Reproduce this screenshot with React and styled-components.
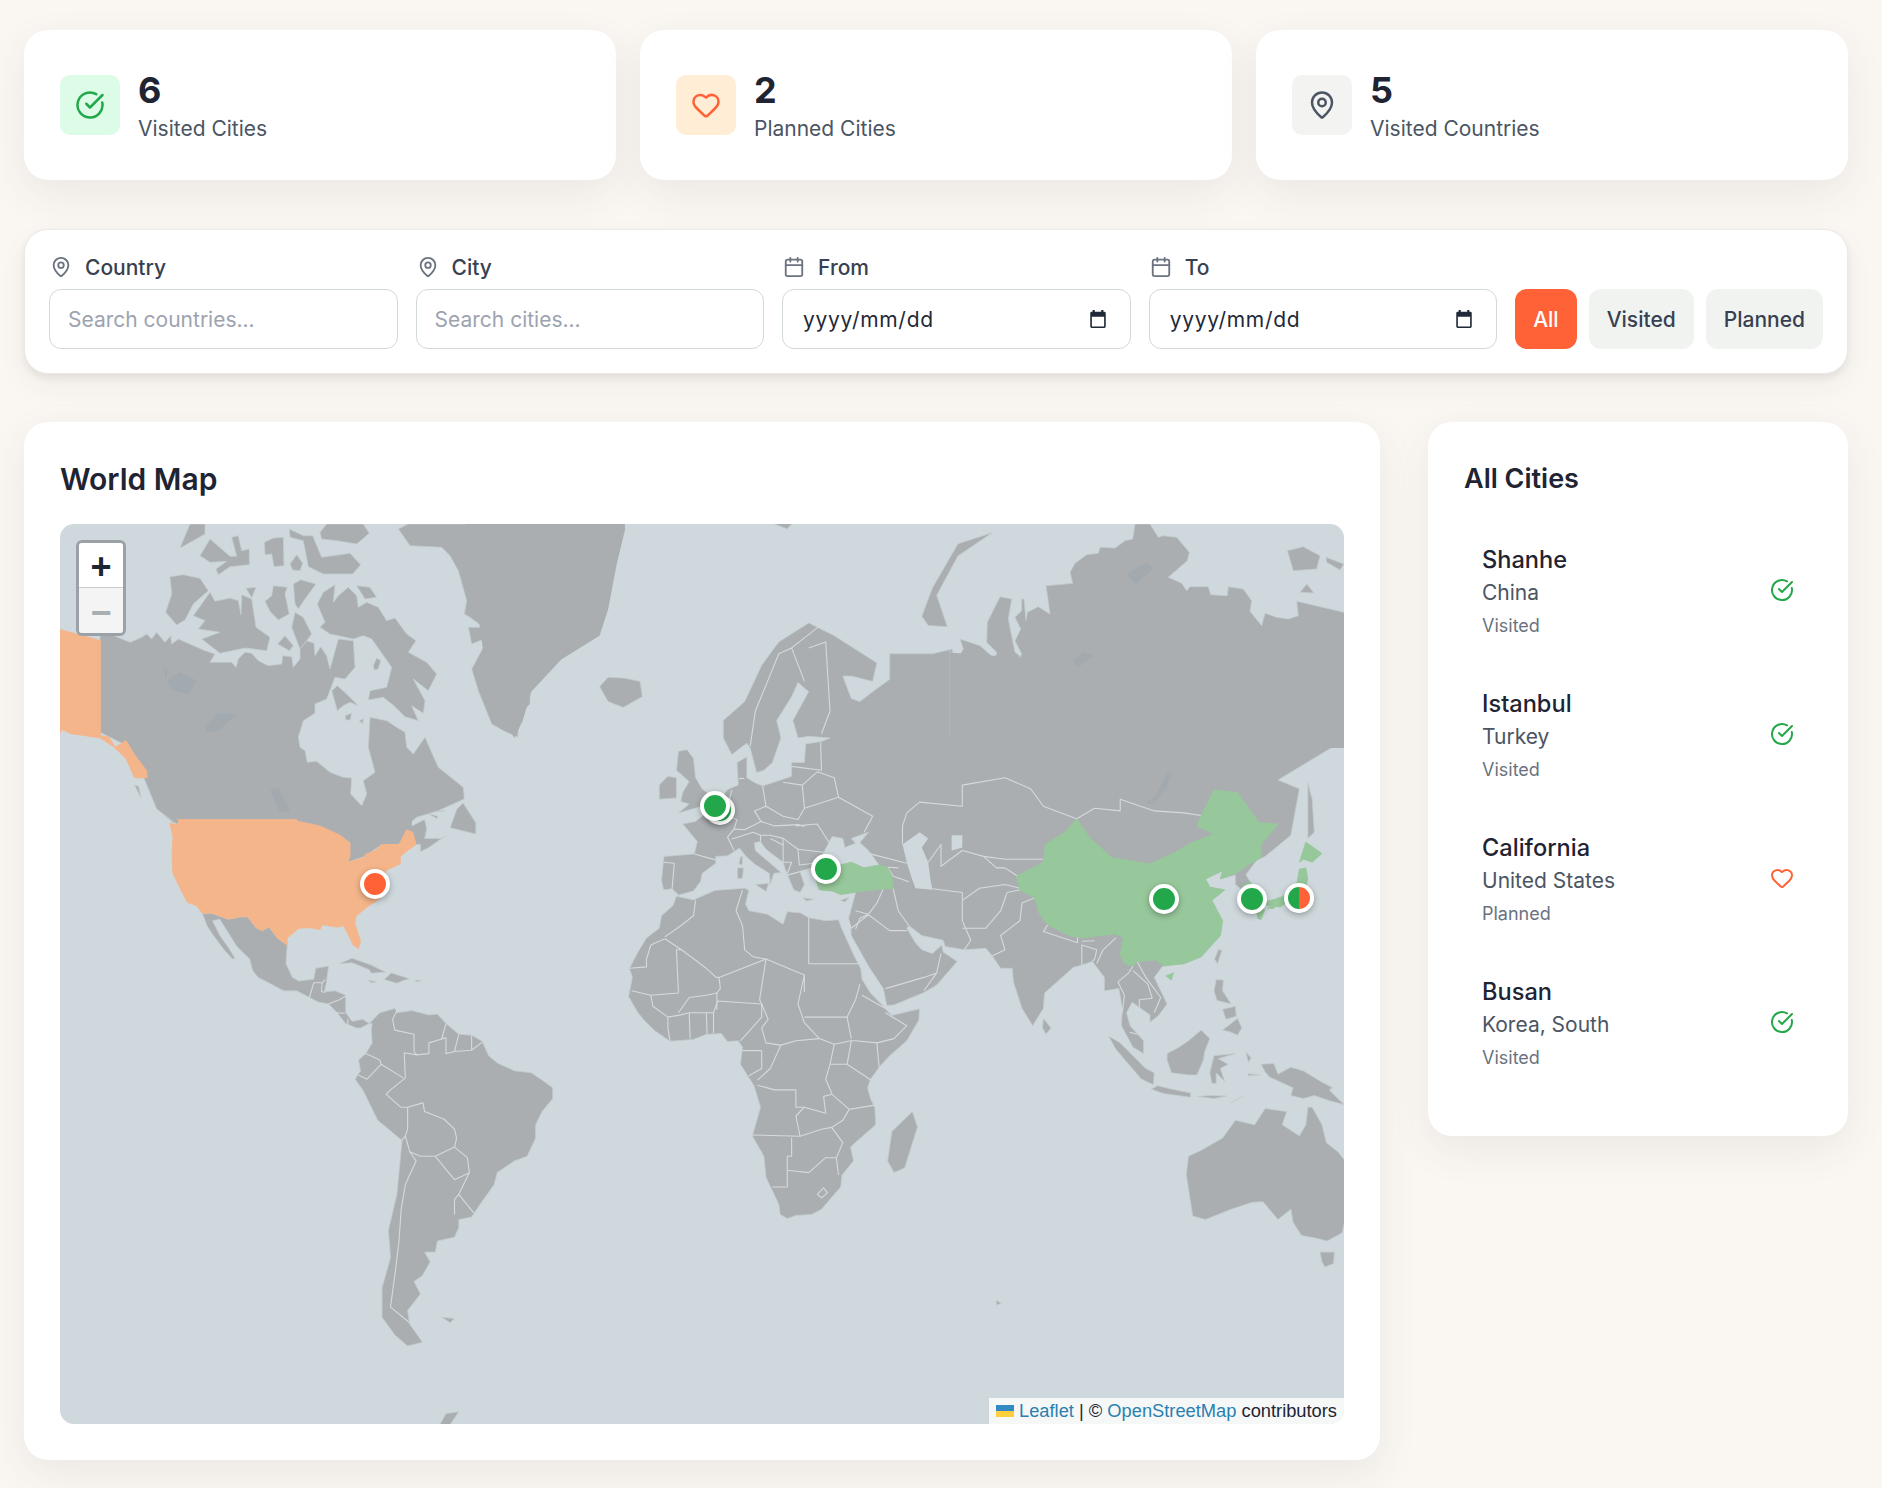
import React from 'react';
import styled, { createGlobalStyle } from 'styled-components';
import { CircleCheckBig, Heart, MapPin, Calendar } from 'lucide-react';

// map projection, leaflet style web mercator
const SCALE = 4.267;
const RADIUS = 244.5;
const projectX = (lon) => 642 + SCALE * lon;
const projectY = (lat) =>
  536 - RADIUS * Math.log(Math.tan(Math.PI / 4 + (lat * Math.PI) / 360));

const toPath = (pts, close = true) =>
  pts
    .map(([lon, lat], i) => `${i ? 'L' : 'M'}${projectX(lon).toFixed(1)} ${projectY(lat).toFixed(1)}`)
    .join('') + (close ? 'Z' : '');

// shapes traced at 3x, with an offset inside the 1284x900 map
const tracedPath = (pts, ox) =>
  pts
    .map(([x, y], i) => `${i ? 'L' : 'M'}${(ox + x / 3).toFixed(1)} ${(y / 3).toFixed(1)}`)
    .join('') + 'Z';

const CANADA_X = 70;
const SIBERIA_X = 890;

// canada and its arctic islands, plus the west coast of greenland
const CANADA_TRACED = [
  [[-90,318],[0,355],[35,340],[50,330],[65,345],[80,325],[105,355],[122,335],[125,360],[145,345],[225,380],[255,390],[240,415],[305,415],[318,430],[325,405],[345,385],[365,388],[385,410],[415,425],[455,420],[458,395],[485,398],[490,430],[510,405],[510,375],[530,350],[552,358],[555,395],[572,368],[590,395],[600,435],[625,345],[670,350],[675,430],[645,465],[615,460],[590,525],[555,540],[555,568],[520,590],[505,640],[510,670],[525,680],[532,715],[560,712],[600,745],[640,760],[665,762],[662,810],[695,845],[710,810],[700,770],[735,745],[715,670],[720,580],[770,590],[800,610],[825,625],[830,670],[850,690],[885,640],[925,730],[1000,790],[1003,825],[925,860],[860,880],[835,900],[140,900],[80,855],[45,770],[0,670],[-90,625]],
  [[120,158],[160,152],[210,163],[235,200],[190,240],[165,288],[140,303],[107,265],[125,210]],
  [[190,275],[240,205],[255,232],[300,222],[325,230],[333,272],[335,212],[365,225],[378,310],[420,340],[410,380],[345,372],[270,388],[215,345],[270,325],[205,315],[225,290]],
  [[180,0],[225,0],[225,30],[190,50],[150,72]],
  [[240,45],[300,97],[320,97],[305,40],[325,35],[335,80],[358,75],[358,122],[300,128],[265,152],[258,135],[290,112],[240,115],[210,95]],
  [[403,55],[430,42],[460,40],[462,125],[432,128],[425,90],[405,92]],
  [[478,15],[520,35],[548,35],[575,100],[660,88],[692,122],[668,150],[580,150],[535,128],[520,50],[480,40]],
  [[480,120],[500,92],[518,118],[510,140],[488,138]],
  [[570,25],[590,0],[700,0],[718,28],[680,60],[620,50],[575,45]],
  [[348,193],[378,190],[365,222]],
  [[405,232],[425,215],[430,185],[472,190],[465,210],[478,270],[445,288],[420,262]],
  [[490,180],[512,167],[558,180],[525,225],[505,255],[495,240]],
  [[562,240],[580,205],[615,182],[610,235],[625,215],[655,190],[680,215],[685,250],[710,235],[745,250],[770,290],[795,282],[830,330],[858,350],[835,385],[890,415],[920,450],[895,500],[850,465],[885,530],[880,568],[845,545],[865,590],[825,578],[795,548],[760,520],[715,528],[720,500],[770,490],[785,430],[725,345],[700,335],[670,345],[600,330],[570,310],[585,295]],
  [[680,185],[720,190],[740,220],[705,225]],
  [[443,360],[465,335],[490,365],[478,380]],
  [[730,425],[740,402],[752,410],[745,435],[733,438]],
  [[485,310],[495,265],[520,280],[545,330],[530,350],[510,375]],
  [[605,500],[622,485],[650,510],[685,545],[660,535],[640,545],[622,560]],
  [[645,575],[665,568],[660,588],[648,588]],
  [[688,590],[700,584],[698,600]],
  [[805,15],[835,0],[1200,0],[1200,540],[1168,572],[1163,640],[1120,620],[1085,600],[1045,500],[1025,435],[1060,370],[1062,345],[1025,360],[1015,310],[1060,310],[1020,280],[1003,270],[1010,230],[985,140],[960,95],[935,70],[840,65]],
];

// north siberian coast and the islands above it
const SIBERIA_TRACED = [
  [[0,380],[25,400],[40,375],[30,345],[90,365],[135,405],[140,385],[110,355],[112,295],[150,218],[185,225],[175,285],[195,385],[215,400],[180,468],[170,462],[215,390],[195,350],[212,315],[195,280],[215,260],[215,225],[222,225],[228,290],[232,265],[265,248],[300,270],[288,185],[368,178],[360,145],[375,118],[410,92],[445,88],[450,70],[495,72],[525,50],[548,45],[555,0],[600,0],[625,40],[640,35],[680,40],[718,85],[712,110],[655,160],[695,178],[710,200],[720,188],[775,188],[782,212],[832,215],[835,188],[880,195],[905,230],[900,262],[935,305],[945,268],[980,280],[1015,285],[1045,275],[1040,232],[1182,265],[1300,300],[1300,640],[0,640]],
  [[1012,80],[1060,68],[1110,95],[1100,135],[1030,140]],
  [[1128,100],[1182,120],[1170,138],[1130,115]],
  [[1050,205],[1070,180],[1092,207]],
];

// slightly darker terrain marks, lakes on the tile layer
const CANADA_SHADE = [
  [[110,470],[150,445],[200,470],[175,510],[130,500]],
  [[225,610],[260,570],[320,570],[265,620],[230,625]],
  [[420,800],[445,790],[480,860],[450,865]],
  [[110,470],[100,430],[112,440]],
];
const SIBERIA_SHADE = [
  [[585,840],[620,810],[650,750],[665,745],[650,790],[610,840]],
  [[530,150],[590,115],[610,135],[555,180]],
  [[370,410],[400,385],[430,395],[385,430]],
];

// plain fills that hide the joins between traced and projected shapes
const SEAMS = [
  // east greenland
  [[-40,83],[-60,83],[-50,65],[-44,60],[-42,62],[-40,65],[-33,68],[-24,70],[-22,72],[-20,75],[-18,77],[-20,81]],
  // siberia
  [[58,68.6],[150.6,66],[150.6,58.8],[58,58.8]],
  // southern canada
  [[-120,51],[-68,51],[-68,47],[-120,47]],
];

// coastlines
const LAND = [
  // canada south of the traced part
  [[-125,50],[-60,50.3],[-66,50],[-70,47.3],[-65,49],[-64.5,47.5],[-65,46],[-61,46],[-60,46.5],[-64,44.5],[-66,43.8],[-66,45],[-67,45],[-71,45],[-75,45],[-79,43],[-83,42],[-82.5,45.3],[-89.5,48],[-95,49],[-123,49]],
  // mexico and central america
  [[-117.1,32.5],[-116,30],[-114.5,28],[-112,25],[-110,23],[-109.5,23.2],[-111,25.5],[-113,28],[-114.7,31],[-113,31.3],[-111,28.5],[-109,25.7],[-106,23],[-105.3,20.5],[-104,19],[-101,17.5],[-98,16],[-95,16],[-93,15],[-90,13.5],[-87.5,13],[-85.5,11],[-83.5,8.5],[-81,7.5],[-80,7.5],[-78,8.5],[-79.5,9.5],[-82,9],[-83.5,11],[-83.5,15],[-86,16],[-88.5,15.8],[-88,18],[-87.5,21.5],[-90.5,21],[-91,18.6],[-94.5,18.2],[-96,19],[-97.5,22],[-97.2,26],[-99.5,27.5],[-101.5,29.8],[-103,29],[-104.5,29.6],[-106.5,31.8],[-108.2,31.8],[-111,31.3],[-114.8,32.5]],
  [[-59,47.7],[-53,46.7],[-53,48.5],[-56,51.5],[-57.5,50.5]],
  [[-128,50.8],[-124,48.5],[-123.5,48.5],[-125,50.2]],
  [[-133,54],[-131.5,52.2],[-132,53.8]],
  [[-64.5,50],[-62,49.5],[-62,49.1]],
  // caribbean
  [[-85,22],[-82,23.2],[-77.5,21.7],[-74.2,20.2],[-77.5,19.9],[-78,20.7],[-82,22.2]],
  [[-74.5,18.5],[-72.8,20],[-68.5,18.7],[-70,18.3],[-71.5,17.7]],
  [[-78.3,18.4],[-76.2,18],[-77.5,17.8]],
  [[-67.2,18.4],[-65.7,18.3],[-67,18]],
  // iceland
  [[-24,65.5],[-22,64],[-18.5,63.4],[-14,64.5],[-14.5,66],[-18,66.3],[-22,66.4]],
  // south america
  [[-78,8.5],[-75.5,11],[-72,12],[-71.5,11],[-68,11.5],[-64,10.5],[-62,10.7],[-60,8.5],[-57,6],[-54,5.8],[-51.5,4.4],[-50,1],[-48,-0.7],[-44,-2.5],[-40,-3],[-37,-5],[-35,-6.5],[-35,-9],[-37.5,-12],[-39,-15],[-39,-18],[-41,-22],[-44,-23],[-48,-25.5],[-48.7,-28],[-52,-32],[-54,-34.5],[-57,-35],[-57,-36.5],[-58,-38.3],[-62,-39],[-62.5,-41],[-65,-41],[-63.7,-42.7],[-65.5,-45],[-67.5,-46],[-66,-48],[-69,-50.5],[-68.5,-52.5],[-65.5,-55],[-69,-55.5],[-72,-54],[-75,-51.5],[-75,-47],[-73,-42],[-73.5,-37],[-71.5,-30],[-70.3,-18.5],[-76,-14],[-79.5,-7],[-81.3,-4.5],[-80,-2.5],[-80.5,0],[-78.8,1.5],[-77.3,4],[-77.5,7],[-77.3,8.5]],
  [[-61,-51.5],[-58,-51.7],[-59,-52.3]],
  [[-60,-63.5],[-57,-63.3],[-62,-66.5],[-64,-66.5]],
  // africa
  [[-6,35.8],[-2,35.1],[3,36.9],[10,37.3],[11,36.9],[10.2,34.3],[11,33],[15.3,32.3],[19,30.3],[20,32.8],[23,32.6],[25,31.6],[29,31],[32,31.2],[32.5,29.9],[35.5,24],[37.2,21],[37.5,18.6],[39.5,15.5],[43,12],[43.3,11.5],[44.5,10.4],[51,11.9],[50.8,9.3],[48,4.5],[44,1],[41.5,-1.7],[39.5,-4.5],[38.8,-6.5],[39.5,-9],[40.5,-11],[40.7,-15],[36.5,-18.5],[34.8,-20],[35.5,-23],[32.8,-26],[32.5,-28.5],[31,-30],[28,-33],[25.7,-34],[22,-34.2],[20,-34.8],[18.3,-34],[18,-32],[15,-26.5],[14.5,-22],[11.8,-17.5],[13.7,-11],[12.2,-6],[9,-1],[9.5,3],[8.5,4.5],[6,4.3],[4.5,6.2],[1,6],[-2,4.8],[-7.5,4.4],[-11,6.8],[-13.3,9],[-15,11],[-17.2,14.7],[-16.3,19],[-17,21],[-15,24.5],[-13,27.5],[-10,29.5],[-9.5,32],[-6.8,34]],
  [[49.3,-12],[50.5,-15.5],[47.5,-24.5],[45,-25.5],[43.5,-23],[44.5,-16.5]],
  // eurasia, the arctic coast east of the urals is traced
  [[-9,37],[-9.5,38.8],[-8.9,43],[-1.8,43.4],[-1.1,45.5],[-4.5,48.3],[-1.6,48.7],[1.5,50.2],[3.5,51.3],[6,53.4],[8.5,54],[8.2,57],[10.5,57.7],[10.5,55],[12.5,54.3],[14.2,53.9],[18.5,54.7],[21,55.2],[21,57],[24,57],[24.3,59.3],[28,59.6],[30,60],[25,60.2],[22.5,60],[21.3,62],[25,65],[22.5,65.9],[21,64.5],[17.5,62],[18.5,60],[16.5,57],[14.5,56],[12.8,55.7],[11.3,58.8],[10.5,59.4],[7,58],[5,60],[5,62],[10,64],[14,67.5],[18,69.5],[25,71],[31,70],[41,67.7],[40,66],[35,66.5],[33,66.5],[35,64.3],[37,64],[40,65],[44,66.2],[44,68.5],[54,68.5],[58.7,68.9],[58.7,64],[180,64],[180,65],[177,62.5],[170,60],[164,59.8],[162,56],[156.5,51],[155.5,57],[163,62],[155,59.5],[149,59.3],[135,54.7],[140,53.5],[138,46.5],[132,43],[130,42.3],[127.5,39.8],[129.5,37],[129,35.2],[126.3,34.5],[126.5,37],[125,38],[125,39.7],[121.5,39],[122,40.5],[118,39],[119,37.5],[122.5,37],[119.5,35],[122,31],[121.5,28],[117,23.5],[113,22],[108,21.5],[106,19],[109,13],[107,10.4],[105,8.8],[105,10.5],[102.5,12.2],[100.8,13.4],[99.5,11],[100.3,8],[103.5,4.5],[103.5,1.5],[101,3],[98.3,8],[98.5,12],[97.7,16.5],[94.3,16],[94.3,19],[91.5,22.5],[89,21.7],[87,21.2],[80.3,15.5],[80,12],[77.5,8],[75,12],[73,18],[72.7,21],[70,21],[68,23.7],[66.5,25.3],[61.5,25],[57,25.7],[56.5,27],[51.5,28],[48.5,30],[48,29.5],[50,26.5],[51.5,25],[54,24.2],[56.2,26],[56.5,24.5],[59.8,22.5],[55,17.3],[52,15.6],[45,12.8],[43.3,12.7],[42.5,16.5],[39,21.5],[35,28],[34.9,29.5],[34.3,31.3],[36,36.5],[32.5,36.1],[30.5,36.8],[27.5,37],[26.5,39.5],[29,41],[31,41.2],[35,42],[38,41],[41.5,41.5],[39,44],[37,45.3],[39,47],[35,46],[36,45.2],[33.5,44.5],[33,46],[30.5,46.3],[28,43],[28,41.5],[26,40.7],[23,40.3],[24,38],[23,36.5],[21.5,37],[19.5,40.8],[19,42],[15,44.2],[13.7,45.5],[12.3,45.3],[12.5,44],[16,41.8],[18.5,40.2],[16.8,40],[16,38],[15.8,40],[12.3,41.7],[10.3,43],[8.8,44.4],[6,43.1],[3.2,43],[3.2,41.8],[0,40],[-0.3,38.6],[-2,36.8],[-5.5,36],[-7,37.2]],
  // european islands
  [[-5.5,50],[1.3,51.2],[1.7,52.7],[0,53.5],[-1.5,55],[-2,57.5],[-3.5,58.6],[-5.5,58.4],[-6,56],[-3,54.5],[-4.5,53],[-5,51.7],[-3,51.3]],
  [[-10,52],[-6,52.2],[-6,54],[-6,55],[-8,55.2],[-10,54]],
  [[12.5,38],[15.6,38.2],[15,36.7]],
  [[8.3,41],[9.7,41],[9.5,39.2],[8.4,39]],
  [[9,42.9],[9.5,43],[9.4,41.5],[8.7,41.7]],
  [[23.6,35.5],[26.3,35.2],[24.5,34.9]],
  [[32.4,35],[34.5,35.6],[33.5,34.7]],
  [[14,77.5],[20,77],[24,78],[20,80],[12,79.5]],
  [[51.5,71.5],[53,70.8],[57.5,70.7],[55,73],[60,75.5],[68,76.8],[60,76.2],[54,73.5]],
  // asia pacific islands
  [[121,25],[121.9,24.9],[120.8,22],[120.1,23]],
  [[142,54.3],[143,52],[143.5,47],[142,46],[142,50]],
  [[80,9.7],[81.8,7.5],[80.6,6],[79.8,7.5]],
  [[95.3,5.6],[98,4],[104,-2],[106,-3],[105.8,-5.8],[103,-4.5],[100,-1],[97,2.5]],
  [[105.3,-6.8],[106.8,-6],[110,-6.8],[114.5,-7.7],[114.5,-8.7],[108,-7.8]],
  [[109,1.5],[111.5,2.8],[114,4.5],[117,7],[119,5],[117.8,2],[117.5,0],[116,-3.5],[114,-3.5],[110,-3],[109,0]],
  [[119.5,-5.5],[119,-3],[120,1],[125,1.5],[121,0.3],[123.3,-1],[121.5,-2],[122.5,-5],[120.5,-3],[120.5,-5.5]],
  [[131,-1],[134,-0.8],[135,-3.3],[138,-1.7],[141,-2.6],[145,-5],[147.8,-6.5],[147,-7],[150.5,-10.4],[147,-9.5],[143.5,-8.3],[141,-9],[138,-8.3],[138.5,-6.5],[133,-4],[132,-2.8]],
  [[120.5,18.5],[122.2,18.4],[122,16],[124,13],[120.7,13.8],[120,16]],
  [[122,7],[125.5,9.7],[126.5,7.5],[125.5,5.8],[124,6.5]],
  [[122,11.8],[125,12.5],[125.2,10.2],[122.8,9.5]],
  [[124,-10],[127,-8.4],[125,-9.5]],
  [[116,-8.5],[119,-8.3],[123,-8.4],[120,-9]],
  [[128,-3.2],[130.8,-3.5],[128,-3.7]],
  [[127.5,1.8],[128.7,0.5],[128,-0.5]],
  // australia
  [[114,-22],[113.5,-26],[115,-34.3],[118,-35],[124,-33],[129,-31.6],[131.5,-31.5],[135,-35],[138,-33],[138.5,-35.5],[140.5,-38],[144,-38.5],[146.5,-39],[150,-37.5],[151,-33.8],[153.5,-28],[152.5,-25],[149,-21],[146.3,-19],[145.3,-15],[143,-11],[142,-11],[141.5,-15],[140,-17.5],[136,-15],[137,-12],[132,-11.3],[129.5,-15],[125,-14],[122,-18],[117,-20.7]],
  [[144.8,-41],[148.2,-41],[148,-43],[146,-43.6],[145.3,-42.7]],
  [[69,-49],[70.2,-49.4],[69,-49.7]],
];

// country borders drawn over the land
const BORDERS = [
  // central america
  [[-92,14.5],[-91,17.8],[-89,17.8],[-88.3,18.5]],[[-89,17.8],[-89.2,15.8],[-88.2,15.7]],[[-87.5,13],[-85,14],[-83.2,15]],[[-85.7,11],[-83.7,10.9]],[[-83,9.5],[-83,8.3]],
  // south america
  [[-71.3,11.8],[-72.5,9.5],[-72,7],[-67.5,6],[-67.5,2],[-66.8,1.2]],[[-60,8.5],[-61,5],[-60.5,5.2]],[[-57,6],[-58,2]],[[-54,5.7],[-54,2.3]],
  [[-51.5,4.2],[-54,2.3],[-58,2],[-60,1.5],[-60,5.2],[-64,4],[-64,1.5],[-66.8,1.2],[-69.8,1.7],[-69.5,-4.2],[-73,-7],[-74,-8],[-70.6,-11],[-69,-11],[-65.4,-10],[-65,-12],[-60.5,-13.7],[-58,-16],[-57.5,-18],[-58,-20],[-55,-22.3],[-54.5,-25.5],[-57,-30],[-53.5,-33.7]],
  [[-78.8,1.5],[-75.5,0],[-75.2,-1],[-78.5,-4.5],[-80.5,-3.5]],[[-75.2,-1],[-70,-4.2]],[[-69,-11],[-69,-16],[-69.5,-17.5],[-70.3,-18.5]],
  [[-69.5,-17.5],[-68.5,-21],[-67,-23],[-69.5,-28],[-70.5,-33],[-71,-39],[-72,-45],[-73,-50],[-68.5,-52.3]],[[-68.5,-21],[-66,-22],[-62.5,-22],[-58,-20]],[[-62.5,-22],[-58,-27],[-54.6,-25.6]],[[-58,-34],[-58,-31],[-57,-30]],
  // africa
  [[-8.7,27.7],[-5,30],[-2,32],[-1.5,35]],[[-17,21],[-13,21.3],[-13,23],[-12,26],[-8.7,27.3]],[[-16.5,16],[-12,15],[-5.5,15.5],[-6,25],[-4.8,25],[-8.7,27.3]],[[-4.8,25],[1,21],[3.3,19],[4,19],[4.3,16.5],[3.5,15.5]],
  [[9.5,37],[8,33],[9.5,30],[10,25],[12,23.5]],[[12,23.5],[15,23],[4,19]],[[25,31.6],[25,22]],[[25,22],[37,22]],[[15,23],[24,19.5],[24,15.7]],[[24,19.5],[22.5,13],[24,8.7]],[[37,17.5],[36,14],[34,10],[35,5]],[[15,23],[13.5,14],[14,13],[15.5,9.5],[14,7.5]],[[14,13],[3.7,13.7],[2.7,11],[2.7,6.3]],[[14,13],[14,10],[9,4.5]],
  [[-12,15],[-11.5,12.5],[-8,10],[-5,10.5],[-3,11],[1,11],[2.7,11]],[[-3,11],[-2.8,5]],[[1,11],[1.2,6.1]],[[-8,10],[-8,7.5],[-7.5,4.4]],[[-5.5,11],[-3,14.5],[1,15],[3.5,15.5],[3.5,11.7]],
  [[14,7.5],[15,4],[18.5,3.5],[22,4.5],[27.5,5],[31,3.7],[30,-1],[29,-4.5],[30.5,-8],[28.5,-8.5],[29,-12.4],[24,-11],[22,-11],[22,-7],[17,-7],[13,-5.9]],[[24,8.7],[27.5,5]],[[24,10],[34,10]],[[31,3.7],[35,4.5],[36,4.5]],[[41,4],[41.5,-1.7]],[[34,-1],[39.5,-4.6]],[[35,4.5],[34,-1],[30,-1]],[[43,11],[48,8],[45,5],[41,4],[36,4.5]],[[34.5,-11.5],[40.5,-10.5]],[[11.8,-17.3],[23,-17.6],[22,-13],[24,-11]],[[21,-18],[21,-22],[20,-22],[20,-28.5],[16.5,-28.5]],[[23,-17.6],[28,-16],[30.4,-15.6],[33,-14],[34.5,-11.5],[30.5,-8]],[[30.4,-15.6],[33,-19],[31.5,-22.3]],[[20,-25],[25,-25.5],[29,-22.3],[31.5,-22.3],[32,-26]],[[27,-30],[28.5,-28.7],[29.4,-29.7],[28,-30.7],[27,-30]],[[9.5,2.2],[14,2.2],[14,-2],[11,-3.7]],[[18.5,3.5],[16,-2],[13,-4.7]],[[37.5,15],[43,12]],
  // middle east and central asia
  [[34.3,31.3],[34.9,29.5]],[[42.5,37.2],[41,34.5],[39,32.3]],[[39,32.3],[37,31.5],[36,29.3]],[[36,33],[39,32.3]],[[35,29.5],[39,32.2],[44,29],[48,29]],[[44.8,37.2],[46,33],[48.5,30]],[[43,16.5],[52,19],[55,20],[52,16]],[[55,20],[56,24.2]],[[54,37.2],[61,36.5],[61,35]],[[61,35],[61,31],[63,27],[61.5,25]],[[61,29.5],[66.5,29.5],[70,33],[71.5,36.5],[74.5,37]],[[61,35],[65,37.3],[71,38],[74.5,37.3]],[[53,42],[56,45],[56,41.3],[61,44],[66,43],[69,41],[71,41],[73,40],[74,39.5]],[[66,43],[71,42.5],[80,42.5]],[[47,45],[47,48],[48,50],[51,51.6],[61,51],[61,54],[71,55],[77,53.5],[80,51],[87.8,49.1]],[[39,43.5],[48,41.8]],[[46,41],[43.5,41.1],[44.8,39.5],[48.5,38.5]],[[87.8,49.1],[92,50.7],[98,50.3],[98,52],[106,50.3],[113,50],[117,49.6]],
  // south and south east asia
  [[68,23.7],[71,25],[70,28],[74.5,31],[75,34.5],[78,35.5]],[[81,30.2],[80,28.8],[88,26.5],[88,27.7]],[[89,26.8],[92,26.9]],[[89,21.7],[89,26],[92.5,25],[92,23],[91.5,22.5]],[[92.5,22],[94,25],[97,27.5]],[[101,21.5],[100,20],[97.5,18],[99,15],[98.5,11]],[[101,20.5],[104.5,17.5],[105.5,14.3]],[[102,22.5],[104,19],[107.5,14.5],[106,11]],[[102.5,12.2],[102.5,14],[105.5,14.3]],[[100.2,6.5],[102,6]],
  // europe
  [[-1.8,43.4],[3.2,42.4]],[[-8.9,42],[-6.5,41.8],[-7,37.2]],[[2.5,51],[6,49.5],[8.2,49],[7.5,47.5],[6,46.2],[7.5,44]],[[3.5,51.3],[6,51],[6,49.5]],[[6,51],[7,53.3]],[[14.2,53.9],[15,51],[12.3,50.3],[13.8,48.7],[10,47.4],[7.5,47.5]],[[8.6,54.9],[9.9,54.9]],[[15,51],[19,49.5],[22.5,49],[24,50.7],[23.5,54],[19,54.4]],[[7,45.9],[12,47],[13.7,46.5],[13.7,45.5]],[[13.8,48.7],[17,48],[22.5,48.2],[24,47.9]],[[13.7,46.5],[16,46.5],[19,46],[22.5,44.2],[22.8,41.5],[26.3,41.8]],[[22,48],[27,48.3],[29.8,45.3]],[[22.5,44.2],[28.5,43.7]],[[24,50.7],[32,52.3],[40,49.5],[38,47]],[[23.5,54],[27,55.8],[31,55],[32,52.3]],[[21,56.5],[28,56]],[[28,56],[27.8,59.5]],[[28,60.5],[30,63],[29,69.5],[25,69]],[[11.3,59],[12.5,63],[18,68.5],[21,69],[28.5,71]],[[24,66],[21,69]],[[19,46],[19,42],[21,42],[20,40]],[[16,46],[19,44.9]],[[20,39.7],[26.3,41]],
];

// caspian and aral, painted in water colour
const WATER = [
  [[47,45],[51,47],[53,46],[51.5,44.5],[53,42],[53.5,39],[54,37],[50,37.3],[49,39.5],[48,42]],
  [[58.5,46.5],[61,46.5],[61,44.5],[58.5,44]],
];

const ORANGE = [
  // contiguous us
  [[-123,49],[-95,49],[-94.6,48.7],[-89.5,48],[-84.8,46.5],[-83.5,45.8],[-82.5,45.3],[-82.5,43],[-83,42],[-79,42.8],[-79,43.3],[-76.5,44],[-75,45],[-71,45],[-69.2,47.4],[-67.8,47],[-67,45],[-69,44],[-70.7,43],[-70.7,41.7],[-74,40.6],[-75,38.5],[-76,37],[-75.5,35.3],[-78,34],[-81,32],[-81.4,30.5],[-80,26.8],[-80.5,25.2],[-81.8,26],[-82.8,28],[-84,30],[-85.5,29.7],[-89,30.2],[-89.5,29.2],[-92,29.6],[-94.5,29.5],[-97.2,27.5],[-97.2,26],[-99.5,27.5],[-101.5,29.8],[-103,29],[-104.5,29.6],[-106.5,31.8],[-108.2,31.8],[-111,31.3],[-114.8,32.5],[-117.1,32.5],[-118.5,34],[-120.6,34.6],[-122,36.8],[-124,40],[-124.2,43],[-124,46.3],[-124.7,48.4],[-123,48.2],[-122.5,49]],
  // alaska
  [[-141,69.6],[-156,71],[-162,70],[-166,68.5],[-162,66.5],[-165,64.5],[-161,64],[-164,63],[-166,61.5],[-162,59],[-158,58.5],[-162,55.5],[-155,57.5],[-153,59],[-151.5,59.3],[-150,61],[-148,60.5],[-145,60.3],[-141,60],[-138,59],[-135,57.5],[-133,55],[-130,55],[-130.2,56],[-133,58],[-135,59.7],[-137.5,58.9],[-139,60.1],[-141,60.3]],
];

const GREEN = [
  // turkey
  [[26.2,40],[27.5,37],[30.5,36.8],[32.5,36.1],[36,36.6],[38,36.8],[42.5,37.2],[44.8,37.2],[44.5,39.5],[43.5,41.1],[41.5,41.5],[38,41],[35,42],[31,41.2],[29,41],[27,41],[28,41.9],[26.3,41.8]],
  // china
  [[73.7,39.5],[80,42],[80.5,45],[85,47],[87.8,49.1],[91,46],[96,42.8],[105,41.7],[111,43.7],[115,45.4],[120,46.7],[116,48],[117,49.6],[120,53.3],[125.5,53],[130.5,48.5],[135,48.3],[131,45],[131,42.8],[128,41.5],[125,40],[121.5,39],[122,40.5],[118,39],[119,37.5],[122.5,37],[119.5,35],[122,31],[121.5,28],[117,23.5],[113,22],[108,21.5],[106.5,22.8],[102,22.5],[101,21.5],[99,22],[98,24],[98.7,27.5],[97,28.3],[92,27.8],[89,27.5],[86,28],[81,30.2],[79,32.5],[78,35.5],[74.5,37]],
  [[108.7,19.3],[110.5,20],[110,18.4]],
  // japan
  [[140,42],[141.5,45.4],[145.3,43.5],[143,42],[141,42.5]],
  [[131,34.4],[136,35.7],[139.5,38.5],[140,40.8],[141.5,41],[142,39],[140.8,35.7],[137,34.6],[135.5,33.7],[132.5,34]],
  [[130,33.5],[131.9,33.2],[131,31.2],[130.2,31.5]],
  [[132.5,33.5],[134.5,34.2],[134,33.4]],
  // south korea
  [[126.3,34.5],[129,35.2],[129.4,37],[128.4,38.6],[126.5,37.7]],
];

const PINS = [
  { lon: 4.2, lat: 50.5, kind: 'green' },
  { lon: 3.1, lat: 51, kind: 'green' },
  { lon: 28.97, lat: 40.8, kind: 'green' },
  { lon: 108.3, lat: 35.2, kind: 'green' },
  { lon: 129, lat: 35.2, kind: 'green' },
  { lon: 139.9, lat: 35.5, kind: 'both' },
  { lon: -76.6, lat: 38, kind: 'orange' },
];

const CITIES = [
  { name: 'Shanhe', country: 'China', status: 'Visited' },
  { name: 'Istanbul', country: 'Turkey', status: 'Visited' },
  { name: 'California', country: 'United States', status: 'Planned' },
  { name: 'Busan', country: 'Korea, South', status: 'Visited' },
];

const App = () => {
  return (
    <>
      <GlobalStyle />
      <Page>
        <Stats>
          <StatCard>
            <StatIcon $bg="#dcfce7" $color="#22a84a">
              <CircleCheckBig size={30} strokeWidth={2} />
            </StatIcon>
            <StatText>
              <StatNumber>6</StatNumber>
              <StatLabel>Visited Cities</StatLabel>
            </StatText>
          </StatCard>
          <StatCard>
            <StatIcon $bg="#ffedd5" $color="#ff6236">
              <Heart size={30} strokeWidth={2} />
            </StatIcon>
            <StatText>
              <StatNumber>2</StatNumber>
              <StatLabel>Planned Cities</StatLabel>
            </StatText>
          </StatCard>
          <StatCard>
            <StatIcon $bg="#f3f4f2" $color="#4b5563">
              <MapPin size={30} strokeWidth={2} />
            </StatIcon>
            <StatText>
              <StatNumber>5</StatNumber>
              <StatLabel>Visited Countries</StatLabel>
            </StatText>
          </StatCard>
        </Stats>

        <FilterBar>
          <Field>
            <FieldLabel>
              <MapPin size={22} strokeWidth={2} />
              Country
            </FieldLabel>
            <SearchInput placeholder="Search countries..." />
          </Field>
          <Field>
            <FieldLabel>
              <MapPin size={22} strokeWidth={2} />
              City
            </FieldLabel>
            <SearchInput placeholder="Search cities..." />
          </Field>
          <Field>
            <FieldLabel>
              <Calendar size={22} strokeWidth={2} />
              From
            </FieldLabel>
            <DateBox>
              yyyy/mm/dd
              <DateIcon />
            </DateBox>
          </Field>
          <Field>
            <FieldLabel>
              <Calendar size={22} strokeWidth={2} />
              To
            </FieldLabel>
            <DateBox>
              yyyy/mm/dd
              <DateIcon />
            </DateBox>
          </Field>
          <FilterButtons>
            <FilterButton $active>All</FilterButton>
            <FilterButton>Visited</FilterButton>
            <FilterButton>Planned</FilterButton>
          </FilterButtons>
        </FilterBar>

        <Main>
          <MapCard>
            <MapTitle>World Map</MapTitle>
            <MapFrame>
              <MapSvg viewBox="0 0 1284 900">
                {LAND.map((pts, i) => (
                  <Land key={i} d={toPath(pts)} />
                ))}
                {CANADA_TRACED.map((pts, i) => (
                  <Land key={i} d={tracedPath(pts, CANADA_X)} />
                ))}
                {SIBERIA_TRACED.map((pts, i) => (
                  <Land key={i} d={tracedPath(pts, SIBERIA_X)} />
                ))}
                {SEAMS.map((pts, i) => (
                  <SeamFill key={i} d={toPath(pts)} />
                ))}
                {CANADA_SHADE.map((pts, i) => (
                  <Shade key={i} d={tracedPath(pts, CANADA_X)} />
                ))}
                {SIBERIA_SHADE.map((pts, i) => (
                  <Shade key={i} d={tracedPath(pts, SIBERIA_X)} />
                ))}
                {WATER.map((pts, i) => (
                  <Lake key={i} d={toPath(pts)} />
                ))}
                {BORDERS.map((pts, i) => (
                  <Border key={i} d={toPath(pts, false)} />
                ))}
                {ORANGE.map((pts, i) => (
                  <Country key={i} $fill="#f5b58a" d={toPath(pts)} />
                ))}
                {GREEN.map((pts, i) => (
                  <Country key={i} $fill="#97c89b" d={toPath(pts)} />
                ))}
              </MapSvg>

              {PINS.map((pin) => (
                <Pin
                  key={pin.lon}
                  $kind={pin.kind}
                  style={{ left: projectX(pin.lon), top: projectY(pin.lat) }}
                />
              ))}

              <ZoomControl>
                <ZoomButton>+</ZoomButton>
                <ZoomButton $disabled>−</ZoomButton>
              </ZoomControl>

              <Attribution>
                <Flag viewBox="0 0 12 8">
                  <rect width="12" height="4" fill="#3389c4" />
                  <rect y="4" width="12" height="4" fill="#ffd03b" />
                </Flag>
                <AttrLink>Leaflet</AttrLink>
                <span>&nbsp;|&nbsp;©&nbsp;</span>
                <AttrLink>OpenStreetMap</AttrLink>
                <span>&nbsp;contributors</span>
              </Attribution>
            </MapFrame>
          </MapCard>

          <CitiesCard>
            <CitiesTitle>All Cities</CitiesTitle>
            {CITIES.map((city) => (
              <CityRow key={city.name}>
                <div>
                  <CityName>{city.name}</CityName>
                  <CityCountry>{city.country}</CityCountry>
                  <CityStatus>{city.status}</CityStatus>
                </div>
                {city.status === 'Visited' ? (
                  <CircleCheckBig size={24} color="#22a84a" strokeWidth={2} />
                ) : (
                  <Heart size={24} color="#ff6236" strokeWidth={2} />
                )}
              </CityRow>
            ))}
          </CitiesCard>
        </Main>
      </Page>
    </>
  );
};

// chromium date picker glyph
const DateIcon = () => (
  <svg width="18" height="20" viewBox="0 0 20 22" fill="#1f2937">
    <rect x="4" y="1" width="2.4" height="3" />
    <rect x="13.6" y="1" width="2.4" height="3" />
    <path d="M3 3h14a1.6 1.6 0 0 1 1.6 1.6v14.8a1.6 1.6 0 0 1-1.6 1.6H3a1.6 1.6 0 0 1-1.6-1.6V4.6A1.6 1.6 0 0 1 3 3zm.2 5.4v10.8h13.6V8.4H3.2z" />
  </svg>
);

export default App;

// style
const GlobalStyle = createGlobalStyle`
  * {
    box-sizing: border-box;
  }

  body {
    margin: 0;
    background: #faf7f3;
    font-family: Inter, "Liberation Sans", sans-serif;
    color: #1f2937;
  }
`;

const Page = styled.div`
  width: 1882px;
  padding: 30px 34px 28px 24px;
`;

const cardShadow = '0 14px 40px rgba(60, 50, 40, 0.08)';

const Stats = styled.div`
  display: grid;
  grid-template-columns: repeat(3, 1fr);
  gap: 24px;
`;

const StatCard = styled.div`
  display: flex;
  align-items: center;
  gap: 18px;
  height: 150px;
  padding: 0 36px;
  background: #fff;
  border-radius: 24px;
  box-shadow: ${cardShadow};
`;

const StatIcon = styled.div`
  display: flex;
  align-items: center;
  justify-content: center;
  width: 60px;
  height: 60px;
  border-radius: 10px;
  background: ${(props) => props.$bg};
  color: ${(props) => props.$color};
`;

const StatText = styled.div`
  display: flex;
  flex-direction: column;
  gap: 2px;
`;

const StatNumber = styled.div`
  font-size: 36px;
  line-height: 45px;
  font-weight: 700;
  color: #1f2433;
`;

const StatLabel = styled.div`
  font-size: 21px;
  line-height: 27px;
  color: #4b5563;
`;

const FilterBar = styled.div`
  display: flex;
  align-items: flex-end;
  gap: 18px;
  margin-top: 49px;
  padding: 24px;
  height: 145px;
  background: #fff;
  border: 1px solid #eceae7;
  border-radius: 24px;
  box-shadow: 0 4px 8px rgba(0, 0, 0, 0.07), 0 12px 30px rgba(60, 50, 40, 0.05);
`;

const Field = styled.div`
  flex: 1;
  min-width: 0;
`;

const FieldLabel = styled.div`
  display: flex;
  align-items: center;
  gap: 13px;
  height: 26px;
  margin-bottom: 9px;
  padding-left: 1px;
  font-size: 21px;
  font-weight: 500;
  color: #374151;

  svg {
    color: #6b7280;
    flex-shrink: 0;
  }
`;

const SearchInput = styled.input`
  display: block;
  width: 100%;
  height: 60px;
  padding: 0 18px;
  border: 1px solid #d1d9dc;
  border-radius: 12px;
  background: #fff;
  font-family: inherit;
  font-size: 21px;
  color: #1f2937;
  outline: none;

  &::placeholder {
    color: #9ca3af;
  }
`;

const DateBox = styled.div`
  display: flex;
  align-items: center;
  justify-content: space-between;
  height: 60px;
  padding: 0 23px 0 20px;
  border: 1px solid #d1d9dc;
  border-radius: 12px;
  background: #fff;
  font-size: 21px;
  letter-spacing: 0.7px;
  color: #1f2937;
`;

const FilterButtons = styled.div`
  display: flex;
  gap: 12px;
`;

const FilterButton = styled.button`
  height: 60px;
  padding: 0 18px;
  border: none;
  border-radius: 12px;
  background: ${(props) => (props.$active ? '#ff6236' : '#f1f3f1')};
  color: ${(props) => (props.$active ? '#fff' : '#374151')};
  font-family: inherit;
  font-size: 21px;
  font-weight: 500;
`;

const Main = styled.div`
  display: grid;
  grid-template-columns: 1356px 420px;
  justify-content: space-between;
  align-items: start;
  margin-top: 48px;
`;

const MapCard = styled.div`
  padding: 36px;
  background: #fff;
  border-radius: 24px;
  box-shadow: ${cardShadow};
`;

const MapTitle = styled.h2`
  margin: 0 0 24px;
  font-size: 30px;
  line-height: 42px;
  font-weight: 600;
  color: #1f2433;
`;

const MapFrame = styled.div`
  position: relative;
  height: 900px;
  overflow: hidden;
  background: #cfd9dd;
  border-radius: 14px;
`;

const MapSvg = styled.svg`
  display: block;
  width: 100%;
  height: 100%;
`;

const Land = styled.path`
  fill: #aaaeb1;
  stroke: #c3cbce;
  stroke-width: 0.8;
  stroke-linejoin: round;
`;

const SeamFill = styled.path`
  fill: #aaaeb1;
`;

const Shade = styled.path`
  fill: #a2a9af;
`;

const Lake = styled.path`
  fill: #cfd9dd;
`;

const Border = styled.path`
  fill: none;
  stroke: #d5dadc;
  stroke-width: 1.1;
  stroke-linejoin: round;
`;

const Country = styled.path`
  fill: ${(props) => props.$fill};
  stroke: ${(props) => props.$fill};
  stroke-width: 0.8;
  stroke-linejoin: round;
`;

const pinBackground = {
  green: '#22a84a',
  orange: '#ff6236',
  both: 'linear-gradient(to right, #22a84a 50%, #ff6236 50%)',
};

const Pin = styled.div`
  position: absolute;
  width: 30px;
  height: 30px;
  margin: -15px 0 0 -15px;
  border: 4.5px solid #fff;
  border-radius: 50%;
  background: ${(props) => pinBackground[props.$kind]};
  box-shadow: 0 2px 6px rgba(0, 0, 0, 0.3);
`;

const ZoomControl = styled.div`
  position: absolute;
  top: 16px;
  left: 16px;
  width: 50px;
  border: 3px solid #9ba1a6;
  border-radius: 6px;
  overflow: hidden;
`;

const ZoomButton = styled.div`
  display: flex;
  align-items: center;
  justify-content: center;
  height: 45px;
  padding-top: 4px;
  background: ${(props) => (props.$disabled ? '#f4f4f4' : '#fff')};
  color: ${(props) => (props.$disabled ? '#aaaeb1' : '#1f2433')};
  border-bottom: ${(props) => (props.$disabled ? 'none' : '1px solid #ccc')};
  font-family: "Liberation Sans", Arial, sans-serif;
  font-size: 36px;
  font-weight: 700;
`;

const Attribution = styled.div`
  position: absolute;
  right: 0;
  bottom: 0;
  display: flex;
  align-items: center;
  height: 26px;
  padding: 0 7px;
  background: rgba(255, 255, 255, 0.8);
  font-family: "Liberation Sans", Arial, sans-serif;
  font-size: 18.3px;
  color: #1f2433;
`;

const Flag = styled.svg`
  width: 18px;
  height: 12px;
  margin-right: 5px;
`;

const AttrLink = styled.span`
  color: #2a80b0;
`;

const CitiesCard = styled.div`
  padding: 36px 36px 40px;
  background: #fff;
  border-radius: 24px;
  box-shadow: ${cardShadow};
`;

const CitiesTitle = styled.h3`
  margin: 0 0 20px;
  font-size: 27px;
  line-height: 42px;
  font-weight: 600;
  color: #1f2433;
`;

const CityRow = styled.div`
  display: flex;
  align-items: center;
  justify-content: space-between;
  height: 144px;
  padding: 0 54px 0 18px;
  margin-right: -36px;

  svg {
    margin-bottom: 5px;
  }
`;

const CityName = styled.div`
  font-size: 23.6px;
  line-height: 33px;
  font-weight: 500;
  color: #1f2433;
`;

const CityCountry = styled.div`
  font-size: 21px;
  line-height: 33px;
  color: #4b5563;
`;

const CityStatus = styled.div`
  font-size: 18px;
  line-height: 33px;
  color: #6b7280;
`;
